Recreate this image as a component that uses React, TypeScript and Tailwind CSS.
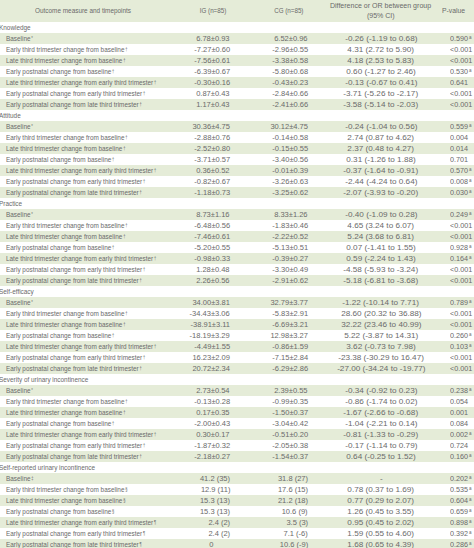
import React from "react";

type Row = [string, string, string, string, string, string, boolean?];

const mk = (
  base: string,
  mark1: string,
  mark2: string,
  vals: [string, string, string, string, boolean][]
): Row[] => {
  const labels = [
    "Baseline",
    "Early third trimester change from baseline",
    "Late third trimester change from baseline",
    "Early postnatal change from baseline",
    "Late third trimester change from early third trimester",
    "Early postnatal change from early third trimester",
    "Early postnatal change from late third trimester",
  ];
  return vals.map((v, i) => [
    labels[i],
    i === 0 ? base : i <= 3 ? mark1 : mark2,
    v[0],
    v[1],
    v[2],
    v[3],
    v[4],
  ]);
};

const groups: { name: string; rows: Row[] }[] = [
  {
    name: "Knowledge",
    rows: mk("*", "†", "†", [
      ["6.78±0.93", "6.52±0.96", "-0.26 (-1.19 to 0.68)", "0.590", true],
      ["-7.27±0.60", "-2.96±0.55", "4.31 (2.72 to 5.90)", "<0.001", false],
      ["-7.56±0.61", "-3.38±0.58", "4.18 (2.53 to 5.83)", "<0.001", false],
      ["-6.39±0.67", "-5.80±0.68", "0.60 (-1.27 to 2.46)", "0.530", true],
      ["-0.30±0.16", "-0.43±0.23", "-0.13 (-0.67 to 0.41)", "0.641", false],
      ["0.87±0.43", "-2.84±0.66", "-3.71 (-5.26 to -2.17)", "<0.001", false],
      ["1.17±0.43", "-2.41±0.66", "-3.58 (-5.14 to -2.03)", "<0.001", false],
    ]),
  },
  {
    name: "Attitude",
    rows: mk("*", "†", "†", [
      ["30.36±4.75", "30.12±4.75", "-0.24 (-1.04 to 0.56)", "0.559", true],
      ["-2.88±0.76", "-0.14±0.58", "2.74 (0.87 to 4.62)", "0.004", false],
      ["-2.52±0.80", "-0.15±0.55", "2.37 (0.48 to 4.27)", "0.014", false],
      ["-3.71±0.57", "-3.40±0.56", "0.31 (-1.26 to 1.88)", "0.701", false],
      ["0.36±0.52", "-0.01±0.39", "-0.37 (-1.64 to -0.91)", "0.570", true],
      ["-0.82±0.67", "-3.26±0.63", "-2.44 (-4.24 to 0.64)", "0.008", true],
      ["-1.18±0.73", "-3.25±0.62", "-2.07 (-3.93 to -0.20)", "0.030", true],
    ]),
  },
  {
    name: "Practice",
    rows: mk("*", "†", "†", [
      ["8.73±1.16", "8.33±1.26", "-0.40 (-1.09 to 0.28)", "0.249", true],
      ["-6.48±0.56", "-1.83±0.46", "4.65 (3.24 to 6.07)", "<0.001", false],
      ["-7.46±0.61", "-2.22±0.52", "5.24 (3.68 to 6.81)", "<0.001", false],
      ["-5.20±0.55", "-5.13±0.51", "0.07 (-1.41 to 1.55)", "0.928", true],
      ["-0.98±0.33", "-0.39±0.27", "0.59 (-2.24 to 1.43)", "0.164", true],
      ["1.28±0.48", "-3.30±0.49", "-4.58 (-5.93 to -3.24)", "<0.001", false],
      ["2.26±0.56", "-2.91±0.62", "-5.18 (-6.81 to -3.68)", "<0.001", false],
    ]),
  },
  {
    name: "Self-efficacy",
    rows: mk("*", "†", "†", [
      ["34.00±3.81", "32.79±3.77", "-1.22 (-10.14 to 7.71)", "0.789", true],
      ["-34.43±3.06", "-5.83±2.91", "28.60 (20.32 to 36.88)", "<0.001", false],
      ["-38.91±3.11", "-6.69±3.21", "32.22 (23.46 to 40.99)", "<0.001", false],
      ["-18.19±3.29", "12.98±3.27", "5.22 (-3.87 to 14.31)", "0.260", true],
      ["-4.49±1.55", "-0.86±1.59", "3.62 (-0.73 to 7.98)", "0.103", true],
      ["16.23±2.09", "-7.15±2.84", "-23.38 (-30.29 to 16.47)", "<0.001", false],
      ["20.72±2.34", "-6.29±2.86", "-27.00 (-34.24 to -19.77)", "<0.001", false],
    ]),
  },
  {
    name: "Severity of urinary incontinence",
    rows: mk("*", "†", "†", [
      ["2.73±0.54", "2.39±0.55", "-0.34 (-0.92 to 0.23)", "0.238", true],
      ["-0.13±0.28", "-0.99±0.35", "-0.86 (-1.74 to 0.02)", "0.054", false],
      ["0.17±0.35", "-1.50±0.37", "-1.67 (-2.66 to -0.68)", "0.001", false],
      ["-2.00±0.43", "-3.04±0.42", "-1.04 (-2.21 to 0.14)", "0.084", false],
      ["0.30±0.17", "-0.51±0.20", "-0.81 (-1.33 to -0.29)", "0.002", true],
      ["-1.87±0.32", "-2.05±0.38", "-0.17 (-1.14 to 0.79)", "0.724", false],
      ["-2.18±0.27", "-1.54±0.37", "0.64 (-0.25 to 1.52)", "0.160", true],
    ]),
  },
  {
    name: "Self-reported urinary incontinence",
    rows: mk("‡", "§", "¶", [
      ["41.2 (35)", "31.8 (27)", "-", "0.202", true],
      ["12.9 (11)", "17.6 (15)", "0.78 (0.37 to 1.69)", "0.535", true],
      ["15.3 (13)", "21.2 (18)", "0.77 (0.29 to 2.07)", "0.604", true],
      ["15.3 (13)", "10.6 (9)", "1.26 (0.45 to 3.55)", "0.659", true],
      ["2.4 (2)", "3.5 (3)", "0.95 (0.45 to 2.02)", "0.898", true],
      ["2.4 (2)", "7.1 (-6)", "1.59 (0.55 to 4.60)", "0.392", true],
      ["0", "10.6 (-9)", "1.68 (0.65 to 4.39)", "0.286", true],
    ]),
  },
];

const cols = "grid grid-cols-[180px_66px_86px_98px_44px]";

export default function App() {
  return (
    <div
      className="w-[474px] h-[548px] overflow-hidden bg-white text-[#6a6a6a] text-[8px] leading-[11px] whitespace-nowrap"
      style={{ fontFamily: '"Liberation Sans", Arial, sans-serif' }}
    >
      <div className="w-[474px]">
        <div className={`${cols} h-[22px] items-center bg-[#e5ecd8] leading-[10px]`}>
          <div className="text-center pr-[14px]">
            <span className="inline-block origin-center scale-x-[0.8]">Outcome measure and timepoints</span>
          </div>
          <div className="text-center">
            <span className="inline-block origin-center scale-x-[0.78]">IG (n=85)</span>
          </div>
          <div className="text-center">
            <span className="inline-block origin-center scale-x-[0.78]">CG (n=85)</span>
          </div>
          <div className="text-center flex flex-col items-center">
            <span className="inline-block origin-center scale-x-[0.88]">Difference or OR between group</span>
            <span className="inline-block origin-center scale-x-[0.88]">(95% CI)</span>
          </div>
          <div className="pl-[12px]">
            <span className="inline-block origin-left scale-x-[0.85]">P-value</span>
          </div>
        </div>
        {groups.map((g) => (
          <div key={g.name}>
            <div className="h-[11px] -ml-px">
              <span className="inline-block origin-left scale-x-[0.8]">{g.name}</span>
            </div>
            {g.rows.map((r, i) => (
              <div
                key={i}
                className={`${cols} h-[11px] ${i % 2 === 0 ? "bg-[#e5ecd8]" : "bg-white"}`}
              >
                <div className="pl-[6px]">
                  <span className="inline-block origin-left scale-x-[0.8]">
                    {r[0]}
                    <sup className="text-[5px] leading-none relative -top-[1px] ml-[1px]">{r[1]}</sup>
                  </span>
                </div>
                <div className={`text-right ${r[2] === "0" ? "pr-[33px]" : "pr-[16px]"}`}>
                  <span className="inline-block origin-right scale-x-[0.94]">{r[2]}</span>
                </div>
                <div className="text-right pr-[24px]">
                  <span className="inline-block origin-right scale-x-[0.94]">{r[3]}</span>
                </div>
                <div className="text-center">
                  <span className="inline-block origin-center scale-x-[1.02]">{r[4]}</span>
                </div>
                <div className="pl-[20px] overflow-hidden">
                  <span className="inline-block origin-left scale-x-[0.9]">
                    {r[5]}
                    {r[6] ? <sup className="text-[5px] leading-none ml-[1px]">a</sup> : null}
                  </span>
                </div>
              </div>
            ))}
          </div>
        ))}
      </div>
    </div>
  );
}
